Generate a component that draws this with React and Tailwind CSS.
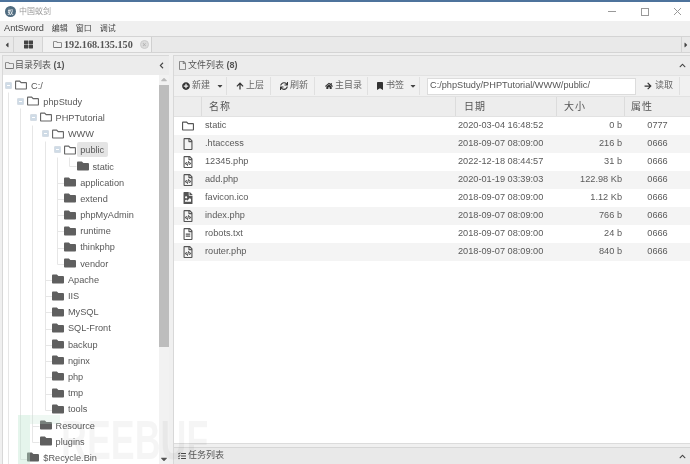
import React from "react";
import { FaRegFolder, FaFolder, FaRegFile, FaRegFileCode, FaFileImage, FaRegFileAlt, FaPlusCircle, FaArrowUp, FaSync, FaHome, FaBookmark, FaArrowRight, FaCaretDown, FaCaretLeft, FaCaretRight, FaChevronLeft, FaChevronUp, FaThLarge, FaTasks } from "react-icons/fa";

const tree = [
  ["C:/", 0, "o"], ["phpStudy", 1, "o"], ["PHPTutorial", 2, "o"], ["WWW", 3, "o"], ["public", 4, "o"], ["static", 5, "f"],
  ["application", 4, "f"], ["extend", 4, "f"], ["phpMyAdmin", 4, "f"], ["runtime", 4, "f"], ["thinkphp", 4, "f"], ["vendor", 4, "f"],
  ["Apache", 3, "f"], ["IIS", 3, "f"], ["MySQL", 3, "f"], ["SQL-Front", 3, "f"], ["backup", 3, "f"], ["nginx", 3, "f"], ["php", 3, "f"], ["tmp", 3, "f"], ["tools", 3, "f"],
  ["Resource", 2, "f"], ["plugins", 2, "f"], ["$Recycle.Bin", 1, "f"],
];

const files = [
  [FaRegFolder, "static", "2020-03-04 16:48:52", "0 b", "0777"],
  [FaRegFile, ".htaccess", "2018-09-07 08:09:00", "216 b", "0666"],
  [FaRegFileCode, "12345.php", "2022-12-18 08:44:57", "31 b", "0666"],
  [FaRegFileCode, "add.php", "2020-01-19 03:39:03", "122.98 Kb", "0666"],
  [FaFileImage, "favicon.ico", "2018-09-07 08:09:00", "1.12 Kb", "0666"],
  [FaRegFileCode, "index.php", "2018-09-07 08:09:00", "766 b", "0666"],
  [FaRegFileAlt, "robots.txt", "2018-09-07 08:09:00", "24 b", "0666"],
  [FaRegFileCode, "router.php", "2018-09-07 08:09:00", "840 b", "0666"],
];

const tools = [
  [FaPlusCircle, "新建", true, "w-[45px]", "ml-0", "ml-[6px]"],
  [FaArrowUp, "上层", false, "w-[44px]", "ml-[9px]", ""],
  [FaSync, "刷新", false, "w-[44px]", "ml-[9px]", ""],
  [FaHome, "主目录", false, "w-[53px]", "ml-[10px]", ""],
  [FaBookmark, "书签", true, "w-[52px]", "ml-[8px]", "ml-[5px]"],
];

function Guides() {
  const lines = [
    [8, 92, 8, 464], [20, 108, 20, 459], [32, 125, 32, 442], [45, 141, 45, 410],
    [57, 157, 57, 264], [69, 157, 69, 166], [69, 166, 76, 166],
    [57, 183, 64, 183], [57, 199, 64, 199], [57, 215, 64, 215], [57, 231, 64, 231], [57, 248, 64, 248], [57, 264, 64, 264],
    [45, 280, 52, 280], [45, 296, 52, 296], [45, 312, 52, 312], [45, 329, 52, 329], [45, 345, 52, 345], [45, 361, 52, 361], [45, 377, 52, 377], [45, 394, 52, 394], [45, 410, 52, 410],
    [32, 426, 39, 426], [32, 442, 39, 442], [20, 459, 27, 459],
  ];
  return (
    <svg className="absolute left-[-3px] top-[-75px] pointer-events-none" width="160" height="464">
      {lines.map((l, i) => <line key={i} x1={l[0] + 0.5} y1={l[1] + 0.5} x2={l[2] + 0.5} y2={l[3] + 0.5} stroke="#e6e6e6" />)}
    </svg>
  );
}

function Row({ name, depth, kind }) {
  const pad = 2 + depth * 12.3;
  const isSel = name === "public";
  return (
    <div className="h-[16.2px] flex items-center relative" style={{ paddingLeft: pad }}>
      {kind === "o" ? (
        <>
          <span className="w-[7px] h-[7px] rounded-[1px] bg-[#cfdbe6] border border-[#d5dde5] shrink-0 flex items-center justify-center">
            <span className="w-[3px] h-px bg-white" />
          </span>
          <FaRegFolder className="text-[#666] text-[12px] ml-[3px] shrink-0" />
        </>
      ) : (
        <>
          <span className="w-[10px] shrink-0" />
          <FaFolder className="text-[#5f5f5f] text-[12px] shrink-0" />
        </>
      )}
      <span className={"leading-[14px] pt-px text-[#585858] whitespace-nowrap " + (isSel ? "ml-[1px] pl-[3px] pr-[4px] bg-[#e4e4e4] rounded-[2px]" : "ml-[4px]")}>{name}</span>
    </div>
  );
}

function Cell({ className, children }) {
  return <div className={"h-full flex items-center shrink-0 " + className}>{children}</div>;
}

export default function App() {
  return (
    <div className="w-[690px] h-[464px] overflow-hidden relative bg-white text-[9.2px] text-[#555] flex flex-col blur-[0.4px]" style={{ fontFamily: '"Liberation Sans","Noto Sans CJK SC",sans-serif' }}>
      <div className="h-[2px] bg-[#4d739c] shrink-0" />
      {/* title bar */}
      <div className="h-[19px] flex items-center shrink-0 bg-white">
        <span className="ml-[5px] w-[11px] h-[11px] rounded-full bg-[#4f6b7f] flex items-center justify-center text-white text-[6px] leading-none">蚁</span>
        <span className="ml-[3px] text-[#9a9a9a] text-[8px]">中国蚁剑</span>
        <span className="ml-auto w-[8px] h-px bg-[#999]" />
        <span className="ml-[25px] w-[8px] h-[8px] border border-[#999]" />
        <svg className="ml-[24px] mr-[8px]" width="9" height="9" viewBox="0 0 9 9"><path d="M1 1l7 7M8 1l-7 7" stroke="#999" fill="none" /></svg>
      </div>
      {/* menu bar */}
      <div className="h-[15px] bg-[#f0f0f0] flex items-center shrink-0 text-[#444] pl-[4px] gap-[8px]">
        <span>AntSword</span><span className="text-[8px]">编辑</span><span className="text-[8px]">窗口</span><span className="text-[8px]">调试</span>
      </div>
      {/* tabs */}
      <div className="h-[17px] bg-[#e9e9e9] border-y border-[#d4d4d4] flex items-stretch shrink-0">
        <div className="w-[13px] ml-[1px] flex items-center justify-center border-r border-[#d4d4d4] text-[#444]"><FaCaretLeft className="text-[8px]" /></div>
        <div className="w-[29px] flex items-center justify-center border-r border-[#d4d4d4] text-[#444]"><FaThLarge className="text-[9px]" /></div>
        <div className="w-[109px] bg-[#f2f2f2] border-r border-[#d0d0d0] flex items-center pl-[10px]">
          <FaRegFolder className="text-[#777] text-[9px] shrink-0" />
          <span className="ml-[2px] font-bold text-[#555] text-[10.2px] whitespace-nowrap" style={{ fontFamily: '"Liberation Serif",serif' }}>192.168.135.150</span>
          <span className="ml-[7px] w-[9px] h-[9px] rounded-full bg-[#dcdcdc] border border-[#ccc] flex items-center justify-center text-[7px] leading-none text-[#aaa] shrink-0">×</span>
        </div>
        <div className="ml-auto w-[9px] border-l border-[#d4d4d4] flex items-center justify-center text-[#444]"><FaCaretRight className="text-[8px]" /></div>
      </div>
      {/* main */}
      <div className="flex-1 min-h-0 flex pt-[2px] bg-[#f0f0f0]">
        {/* left panel */}
        <div className="w-[167px] ml-[2px] flex flex-col border-l border-[#d8d8d8] shrink-0 bg-white">
          <div className="h-[20px] shrink-0 bg-[#ececec] border-t border-[#d8d8d8] flex items-center pl-[2px] text-[#555]">
            <FaRegFolder className="text-[#777] text-[9px] mr-[1px]" />
            <span className="text-[9px]">目录列表 <b>(1)</b></span>
            <FaChevronLeft className="ml-auto mr-[4px] text-[7px] text-[#444]" />
          </div>
          <div className="flex-1 min-h-0 flex relative">
            <div className="flex-1 min-w-0 pt-[2px] overflow-hidden relative">
              <Guides />
              {tree.map((t) => <Row key={t[0] + t[1]} name={t[0]} depth={t[1]} kind={t[2]} />)}
            </div>
            <div className="w-[10px] bg-[#f2f2f2] shrink-0 flex flex-col items-center">
              <FaCaretDown className="text-[8px] text-[#bbb] rotate-180 h-[10px] shrink-0" />
              <div className="w-full h-[262px] bg-[#bdbdbd] shrink-0" />
              <FaCaretDown className="mt-auto text-[8px] text-[#555] h-[10px]" />
            </div>
          </div>
        </div>
        {/* right panel */}
        <div className="flex-1 min-w-0 ml-[4px] flex flex-col border-l border-[#d8d8d8]">
          <div className="h-[20px] shrink-0 bg-[#ececec] border-t border-[#d8d8d8] flex items-center pl-[4px] text-[#555]">
            <FaRegFile className="text-[#777] text-[9px] mr-[1px]" />
            <span className="text-[9px]">文件列表 <b>(8)</b></span>
            <FaChevronUp className="ml-auto mr-[4px] text-[7px] text-[#444]" />
          </div>
          {/* toolbar */}
          <div className="h-[22px] shrink-0 bg-[#f1f1f1] border-y border-[#e2e2e2] flex items-center">
            <span className="w-[8px] shrink-0" />
            {tools.map(([Icon, label, caret, w, iconMl, caretMl]) => (
              <div key={label} className={"h-[18px] flex items-center border-r border-[#e0e0e0] shrink-0 " + w}>
                <Icon className={"text-[8px] text-[#333] mr-[2px] shrink-0 " + iconMl} />
                <span className="text-[#666] text-[9px]">{label}</span>
                {caret && <FaCaretDown className={"text-[8px] text-[#444] " + caretMl} />}
              </div>
            ))}
            <div className="ml-[7px] w-[209px] h-[17px] bg-white border border-[#dcdcdc] flex items-center pl-[2px] text-[#555] shrink-0">C:/phpStudy/PHPTutorial/WWW/public/</div>
            <div className="ml-[7px] flex items-center h-[18px] w-[37px] border-r border-[#e0e0e0] shrink-0">
              <FaArrowRight className="text-[8px] text-[#333] mr-[3px] ml-[1px]" />
              <span className="text-[#666] text-[9px]">读取</span>
            </div>
          </div>
          {/* grid */}
          <div className="h-[20px] shrink-0 bg-[#ededed] border-b border-[#e2e2e2] flex items-center text-[#555] text-[10px] tracking-[1px]">
            <Cell className="w-[28px] border-r border-[#dcdcdc]" />
            <Cell className="w-[254px] border-r border-[#dcdcdc] pl-[7px]">名称</Cell>
            <Cell className="w-[101px] border-r border-[#dcdcdc] pl-[8px]">日期</Cell>
            <Cell className="w-[68px] border-r border-[#dcdcdc] pl-[7px]">大小</Cell>
            <Cell className="flex-1 pl-[6px]">属性</Cell>
          </div>
          <div className="flex-1 min-h-0 bg-white">
            {files.map(([Icon, name, date, size, attr], i) => (
              <div key={name} className={"h-[18px] flex items-center text-[#5a5a5a] " + (i % 2 ? "bg-[#f4f4f4]" : "bg-white")}>
                <Cell className="w-[28px] justify-center"><Icon className="text-[12px] text-[#555]" /></Cell>
                <Cell className="w-[254px] pl-[3px]">{name}</Cell>
                <Cell className="w-[101px] pl-[2px]">{date}</Cell>
                <Cell className="w-[68px] justify-end pr-[3px]">{size}</Cell>
                <Cell className="flex-1 justify-center">{attr}</Cell>
              </div>
            ))}
          </div>
          <div className="h-[4px] shrink-0 bg-[#f0f0f0] border-t border-[#dcdcdc]" />
          <div className="h-[17px] shrink-0 bg-[#e9e9e9] border-t border-[#d6d6d6] flex items-center pl-[4px] text-[#555]">
            <FaTasks className="text-[8px] text-[#444] mr-[2px]" />
            <span className="text-[9px]">任务列表</span>
            <FaChevronUp className="ml-auto mr-[4px] text-[7px] text-[#444]" />
          </div>
        </div>
      </div>
      {/* watermark */}
      <div className="absolute left-[18px] top-[415px] w-[12px] h-[49px] bg-[#bfe5d0]/40 pointer-events-none" />
      <div className="absolute left-[30px] top-[415px] w-[30px] h-[9px] bg-[#bfe5d0]/25 pointer-events-none" />
      <div aria-hidden="true" className="absolute left-[61px] top-[416px] text-[56px] font-bold leading-[48px] text-black/[0.04] whitespace-nowrap origin-left scale-x-[0.64] pointer-events-none">REEBUF</div>
    </div>
  );
}
